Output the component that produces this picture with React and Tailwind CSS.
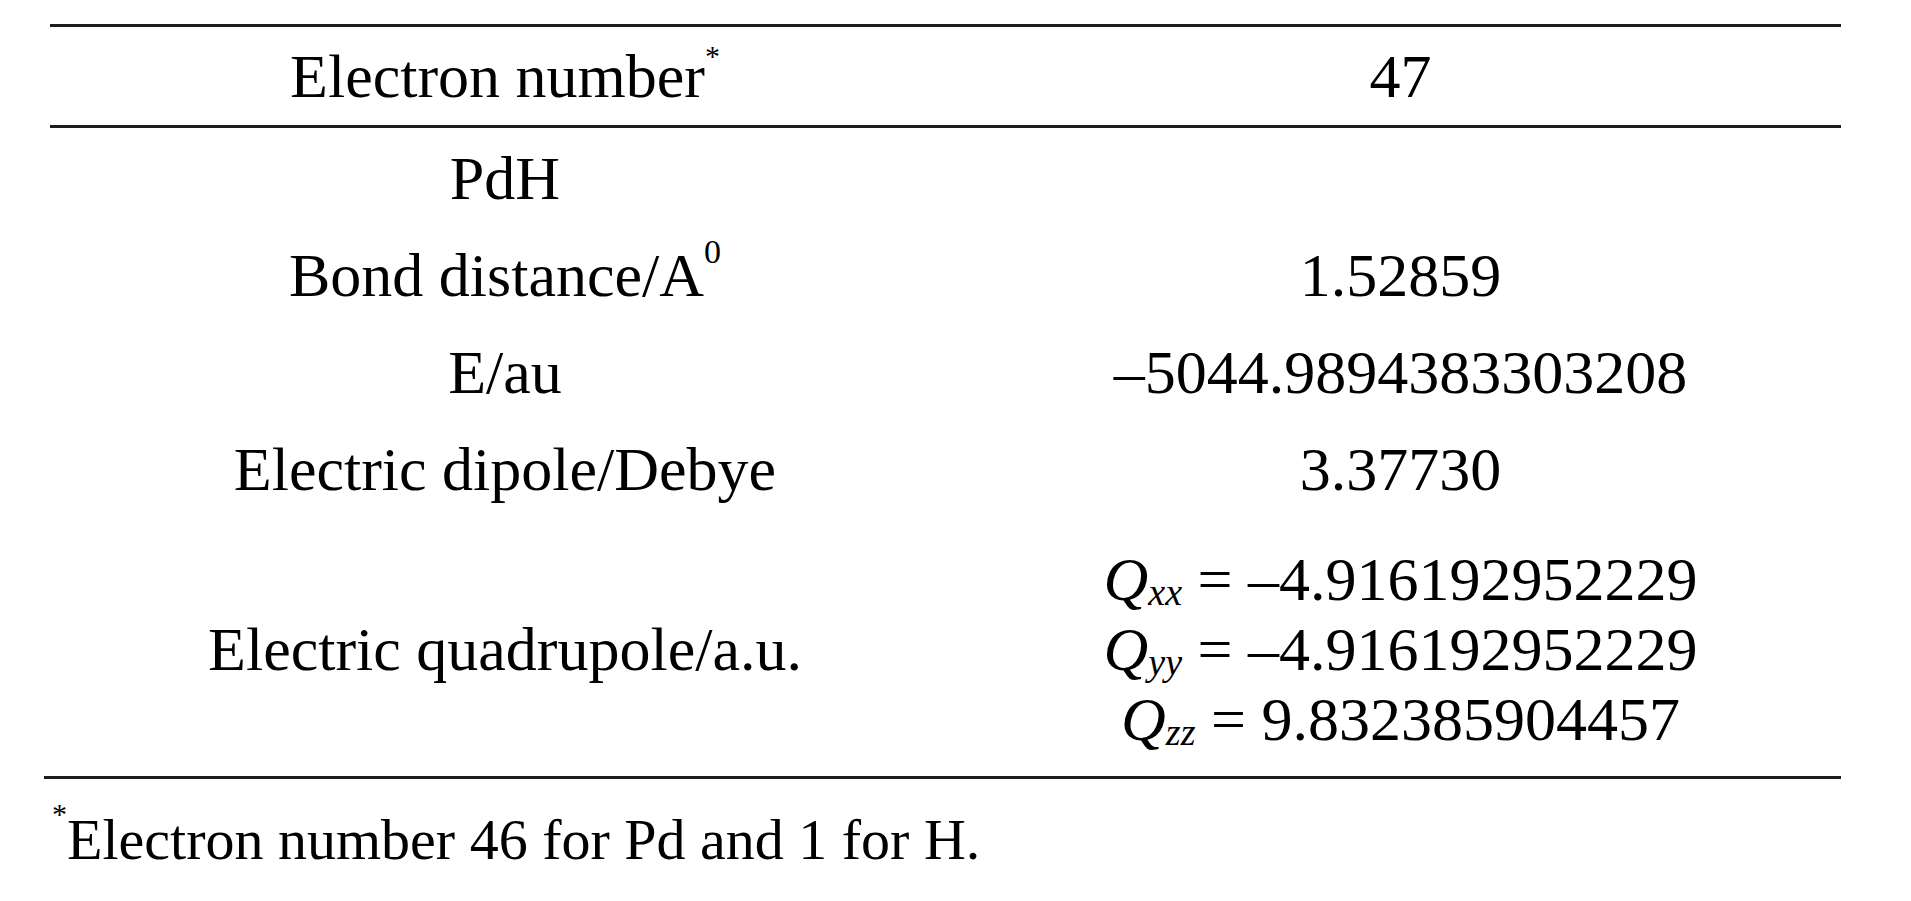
import React from "react";

const rows = [
  { label: "PdH", value: "" },
  { label: <>Bond distance/A<span className="relative top-[-33px] text-[34px] leading-none">0</span></>, value: "1.52859" },
  { label: "E/au", value: "–5044.9894383303208" },
  { label: "Electric dipole/Debye", value: "3.37730" },
];

const quadrupole = [
  { axis: "xx", value: "–4.916192952229" },
  { axis: "yy", value: "–4.916192952229" },
  { axis: "zz", value: "9.832385904457" },
];

function Rule({ className = "" }) {
  return <div className={`h-[3px] bg-[#1c1c1c] ${className}`} />;
}

export default function App() {
  return (
    <div className="min-h-screen bg-white pt-[24px] text-black font-['Liberation_Serif',serif]">
      <div className="ml-[50px] w-[1791px] text-[62px]">
        <Rule />
        <div className="grid h-[98px] grid-cols-[910px_881px] text-center leading-[98px]">
          <div>
            Electron number<span className="relative top-[-31px] text-[30px] leading-none">*</span>
          </div>
          <div>47</div>
        </div>
        <Rule />

        <div className="pt-[2px]">
          {rows.map((row) => (
            <div key={row.value || "pdh"} className="grid h-[97px] grid-cols-[910px_881px] text-center leading-[97px]">
              <div>{row.label}</div>
              <div>{row.value}</div>
            </div>
          ))}
        </div>

        <div className="mt-[26px] mb-[22px] grid grid-cols-[910px_881px] items-center text-center">
          <div className="leading-[70px]">Electric quadrupole/a.u.</div>
          <div className="flex flex-col items-center">
            {quadrupole.map((q) => (
              <div key={q.axis} className="h-[70px] leading-[70px]">
                <span className="italic">Q</span>
                <span className="relative top-[5px] text-[38px] italic leading-none">{q.axis}</span> = {q.value}
              </div>
            ))}
          </div>
        </div>
      </div>
      <Rule className="ml-[44px] w-[1797px]" />

      <p className="mt-[26px] ml-[52px] text-[58px] leading-[70px]">
        <span className="relative top-[-35px] text-[30px] leading-none">*</span>Electron number 46 for Pd and 1 for H.
      </p>
    </div>
  );
}
